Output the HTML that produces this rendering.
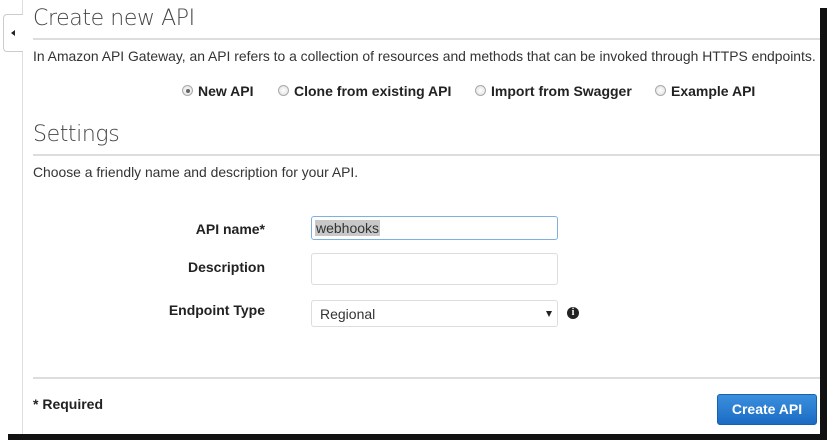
<!DOCTYPE html>
<html><head><meta charset="utf-8"><style>
*{margin:0;padding:0;box-sizing:border-box}
body{width:830px;height:444px;background:#fff;position:relative;overflow:hidden;font-family:"Liberation Sans",Arial,sans-serif;color:#333}
.a{position:absolute;white-space:nowrap}
.h{font-size:22px;color:#444;font-family:"DejaVu Sans","Liberation Sans",sans-serif;font-weight:300;letter-spacing:-0.4px}
.rule{position:absolute;height:2px;background:#ddd}
.t{font-size:13.9px;color:#333}
.b{font-size:14px;font-weight:bold;color:#222}
.radio{position:absolute;width:11px;height:11px;border-radius:50%;border:1px solid #aaa;background:radial-gradient(#fff,#ddd)}
.in{position:absolute;border:1px solid #ddd;border-radius:3px;background:#fff}
</style></head><body>
<div style="position:absolute;left:22px;top:0;width:1px;height:436px;background:#ddd"></div>
<div style="position:absolute;left:3px;top:14px;width:20px;height:38px;border:1px solid #ccc;border-right:none;border-radius:4px 0 0 4px;background:#fff"></div>
<div style="position:absolute;left:11px;top:30px;width:0;height:0;border-top:3px solid transparent;border-bottom:3px solid transparent;border-right:4px solid #222"></div>

<div class="a h" style="left:33px;top:6px">Create new API</div>
<div class="rule" style="left:33px;top:38px;width:787px"></div>
<div class="a t" style="left:33px;top:48px">In Amazon API Gateway, an API refers to a collection of resources and methods that can be invoked through HTTPS endpoints.</div>

<div class="radio" style="left:182px;top:85px"><div style="position:absolute;left:3px;top:3px;width:4px;height:4px;border-radius:50%;background:#666"></div></div>
<div class="a b" style="left:198px;top:83px">New API</div>
<div class="radio" style="left:278px;top:85px"></div>
<div class="a b" style="left:294px;top:83px">Clone from existing API</div>
<div class="radio" style="left:475px;top:85px"></div>
<div class="a b" style="left:491px;top:83px">Import from Swagger</div>
<div class="radio" style="left:655px;top:85px"></div>
<div class="a b" style="left:671px;top:83px">Example API</div>

<div class="a h" style="left:33px;top:122px">Settings</div>
<div class="rule" style="left:33px;top:154px;width:787px"></div>
<div class="a t" style="left:33px;top:164px">Choose a friendly name and description for your API.</div>

<div class="a b" style="left:120px;top:221px;width:145px;text-align:right">API name*</div>
<div class="in" style="left:311px;top:216px;width:247px;height:24px;border-color:#7fb0e0"><span style="position:absolute;left:3px;top:3px;background:#c8c8c8;font-size:14px;color:#333;padding:0 1px">webhooks</span></div>
<div class="a b" style="left:120px;top:259px;width:145px;text-align:right">Description</div>
<div class="in" style="left:311px;top:253px;width:247px;height:32px"></div>
<div class="a b" style="left:120px;top:302px;width:145px;text-align:right">Endpoint Type</div>
<div class="in" style="left:311px;top:300px;width:247px;height:27px"><span style="position:absolute;left:8px;top:5px;font-size:14px;color:#333">Regional</span><span style="position:absolute;right:5px;top:10px;width:0;height:0;border-left:3px solid transparent;border-right:3px solid transparent;border-top:6px solid #222"></span></div>
<div style="position:absolute;left:567px;top:307px;width:12px;height:12px;border-radius:50%;background:#222;color:#fff;font-size:10px;font-weight:bold;text-align:center;line-height:12px;font-family:'Liberation Serif',serif">i</div>

<div class="rule" style="left:33px;top:377px;width:787px"></div>
<div class="a b" style="left:33px;top:396px">* Required</div>
<div style="position:absolute;left:717px;top:394px;width:100px;height:31px;border-radius:3px;background:linear-gradient(#3b8fdd,#1a6cc4);border:1px solid #1860b0;color:#fff;font-size:14px;font-weight:bold;text-align:center;line-height:29px">Create API</div>

<div style="position:absolute;left:820px;top:8px;width:7px;height:432px;background:#111"></div>
<div style="position:absolute;left:8px;top:434px;width:819px;height:6px;background:#111"></div>
</body></html>
